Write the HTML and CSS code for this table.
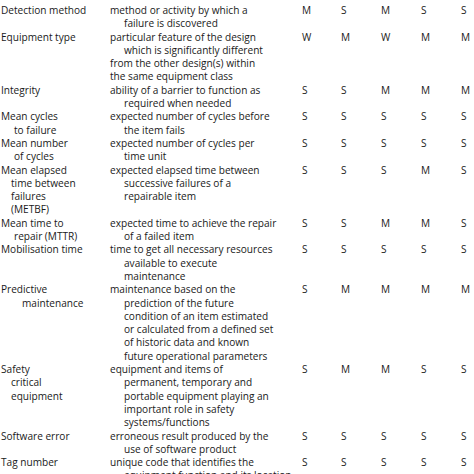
FILE: index.html
```html
<!DOCTYPE html>
<html>
<head>
<meta charset="utf-8">
<link rel="stylesheet" href="styles.css">
</head>
<body>
<div class="tbl">
  <div class="term"><span class="ln">Detection method</span></div>
  <div class="desc"><span class="ln">method or activity by which a</span><span class="ln in">failure is discovered</span></div>
  <div class="r">M</div><div class="r">S</div><div class="r">M</div><div class="r">S</div><div class="r">S</div>

  <div class="term"><span class="ln">Equipment type</span></div>
  <div class="desc"><span class="ln">particular feature of the design</span><span class="ln in">which is significantly different</span><span class="ln">from the other design(s) within</span><span class="ln">the same equipment class</span></div>
  <div class="r">W</div><div class="r">M</div><div class="r">W</div><div class="r">M</div><div class="r">M</div>

  <div class="term"><span class="ln">Integrity</span></div>
  <div class="desc"><span class="ln">ability of a barrier to function as</span><span class="ln in">required when needed</span></div>
  <div class="r">S</div><div class="r">S</div><div class="r">M</div><div class="r">M</div><div class="r">M</div>

  <div class="term"><span class="ln">Mean cycles</span><span class="ln t2">to failure</span></div>
  <div class="desc"><span class="ln">expected number of cycles before</span><span class="ln in">the item fails</span></div>
  <div class="r">S</div><div class="r">S</div><div class="r">S</div><div class="r">S</div><div class="r">S</div>

  <div class="term"><span class="ln">Mean number</span><span class="ln t2">of cycles</span></div>
  <div class="desc"><span class="ln">expected number of cycles per</span><span class="ln in">time unit</span></div>
  <div class="r">S</div><div class="r">S</div><div class="r">S</div><div class="r">S</div><div class="r">S</div>

  <div class="term"><span class="ln">Mean elapsed</span><span class="ln t1">time between</span><span class="ln t1">failures</span><span class="ln t1">(METBF)</span></div>
  <div class="desc"><span class="ln">expected elapsed time between</span><span class="ln in">successive failures of a</span><span class="ln in">repairable item</span></div>
  <div class="r">S</div><div class="r">S</div><div class="r">S</div><div class="r">M</div><div class="r">S</div>

  <div class="term"><span class="ln">Mean time to</span><span class="ln t2">repair (MTTR)</span></div>
  <div class="desc"><span class="ln">expected time to achieve the repair</span><span class="ln in">of a failed item</span></div>
  <div class="r">S</div><div class="r">S</div><div class="r">M</div><div class="r">M</div><div class="r">S</div>

  <div class="term"><span class="ln">Mobilisation time</span></div>
  <div class="desc"><span class="ln">time to get all necessary resources</span><span class="ln in">available to execute</span><span class="ln in">maintenance</span></div>
  <div class="r">S</div><div class="r">S</div><div class="r">S</div><div class="r">S</div><div class="r">S</div>

  <div class="term"><span class="ln">Predictive</span><span class="ln t3">maintenance</span></div>
  <div class="desc"><span class="ln">maintenance based on the</span><span class="ln in">prediction of the future</span><span class="ln in">condition of an item estimated</span><span class="ln in">or calculated from a defined set</span><span class="ln in">of historic data and known</span><span class="ln in">future operational parameters</span></div>
  <div class="r">S</div><div class="r">M</div><div class="r">M</div><div class="r">M</div><div class="r">M</div>

  <div class="term"><span class="ln">Safety</span><span class="ln t1">critical</span><span class="ln t1">equipment</span></div>
  <div class="desc"><span class="ln">equipment and items of</span><span class="ln in">permanent, temporary and</span><span class="ln in">portable equipment playing an</span><span class="ln in">important role in safety</span><span class="ln in">systems/functions</span></div>
  <div class="r">S</div><div class="r">M</div><div class="r">M</div><div class="r">S</div><div class="r">S</div>

  <div class="term"><span class="ln">Software error</span></div>
  <div class="desc"><span class="ln">erroneous result produced by the</span><span class="ln in">use of software product</span></div>
  <div class="r">S</div><div class="r">S</div><div class="r">S</div><div class="r">S</div><div class="r">S</div>

  <div class="term"><span class="ln">Tag number</span></div>
  <div class="desc"><span class="ln">unique code that identifies the</span><span class="ln in">equipment function and its location</span></div>
  <div class="r">S</div><div class="r">S</div><div class="r">S</div><div class="r">S</div><div class="r">S</div>
</div>
</body>
</html>
```

FILE: styles.css
```css
html, body {
  margin: 0;
  padding: 0;
  background: #ffffff;
  overflow: hidden;
}
body {
  width: 474px;
  height: 474px;
  font-family: "Open Sans", "Noto Sans", sans-serif;
  font-size: 10.1px;
  font-weight: 500;
  line-height: 13.3px;
  color: #1a1a1a;
}
.tbl {
  display: grid;
  grid-template-columns: 109px 192px 39px 40px 40px 40px 14px;
  padding-top: 4px;
  padding-left: 1px;
}
.term, .desc, .r {
  white-space: nowrap;
}
.ln {
  display: block;
}
.desc .in { padding-left: 14px; }
.term .t1 { padding-left: 10px; }
.term .t2 { padding-left: 13px; }
.term .t3 { padding-left: 21px; }
.r {
  overflow: visible;
}
```
